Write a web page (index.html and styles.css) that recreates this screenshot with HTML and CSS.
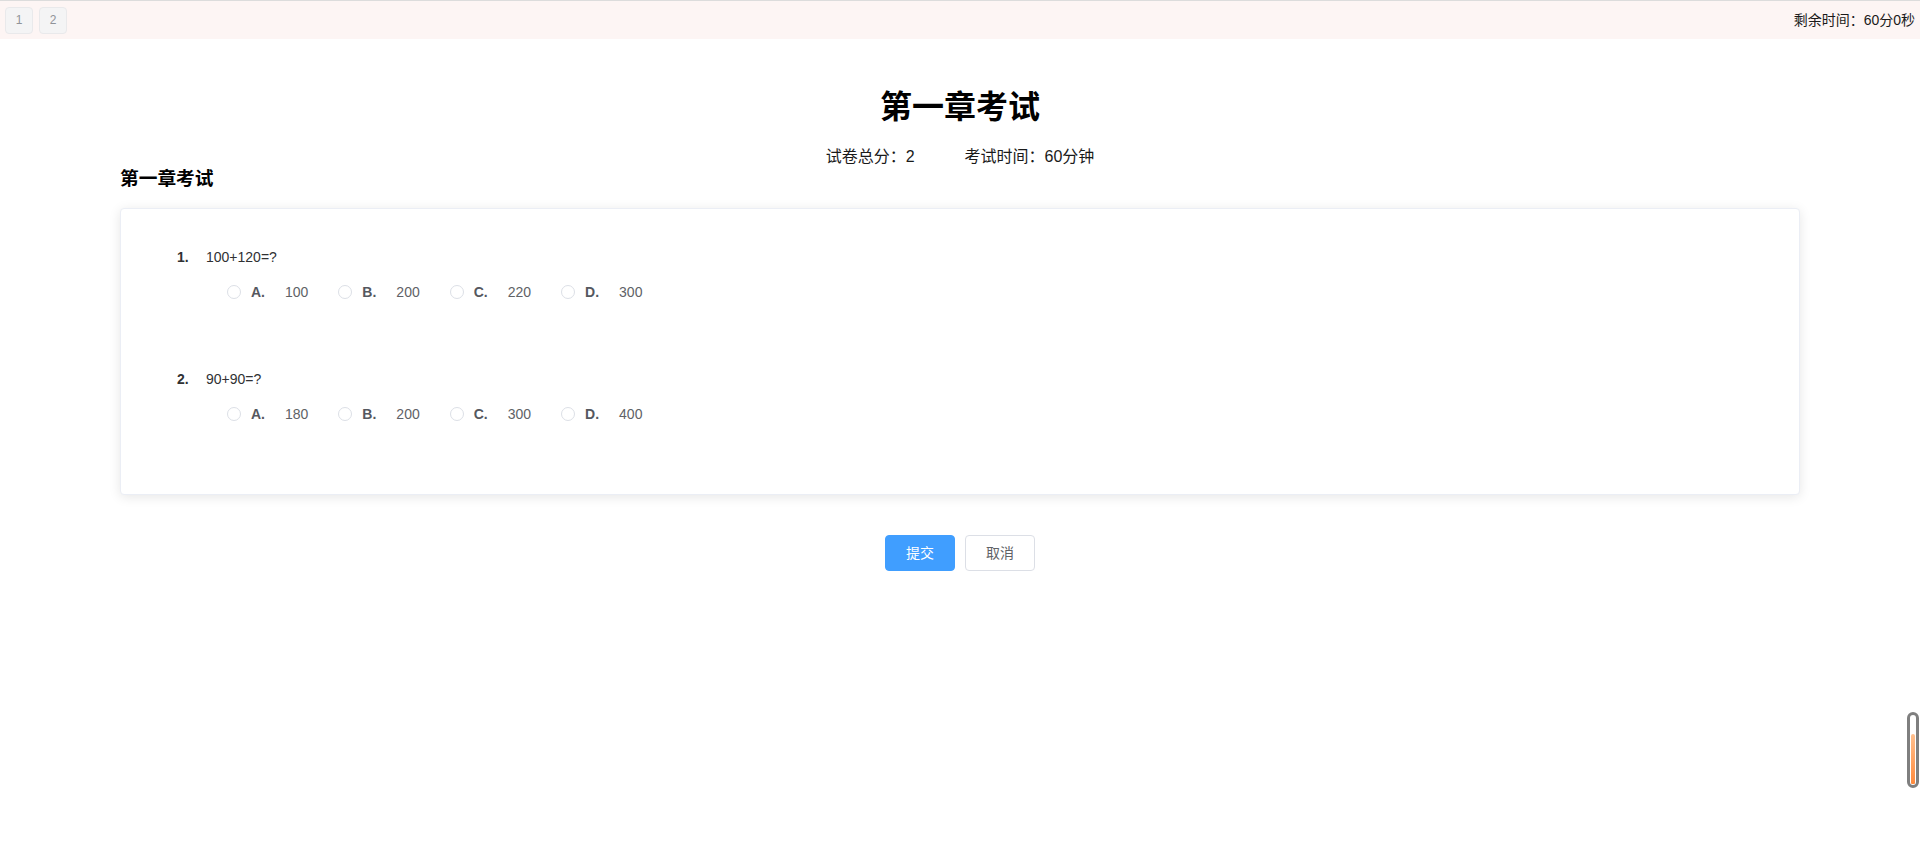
FILE: index.html
```html
<!DOCTYPE html>
<html lang="zh-CN">
<head>
<meta charset="utf-8">
<title>第一章考试</title>
<link rel="stylesheet" href="styles.css">
</head>
<body>
<header class="topbar">
  <nav class="nav">
    <button class="nav-btn">1</button>
    <button class="nav-btn">2</button>
  </nav>
  <div class="timer">剩余时间：60分0秒</div>
</header>
<main class="page">
  <h1 class="title">第一章考试</h1>
  <div class="meta"><span>试卷总分：2</span><span>考试时间：60分钟</span></div>
  <h3 class="section">第一章考试</h3>
  <div class="card">
    <div class="question">
      <div class="q-head"><span class="q-num">1.</span><span class="q-text">100+120=?</span></div>
      <div class="options">
        <label class="radio"><span class="radio-input"></span><span class="radio-label"><b class="opt-key">A.</b><span>100</span></span></label>
        <label class="radio"><span class="radio-input"></span><span class="radio-label"><b class="opt-key">B.</b><span>200</span></span></label>
        <label class="radio"><span class="radio-input"></span><span class="radio-label"><b class="opt-key">C.</b><span>220</span></span></label>
        <label class="radio"><span class="radio-input"></span><span class="radio-label"><b class="opt-key">D.</b><span>300</span></span></label>
      </div>
    </div>
    <div class="question">
      <div class="q-head"><span class="q-num">2.</span><span class="q-text">90+90=?</span></div>
      <div class="options">
        <label class="radio"><span class="radio-input"></span><span class="radio-label"><b class="opt-key">A.</b><span>180</span></span></label>
        <label class="radio"><span class="radio-input"></span><span class="radio-label"><b class="opt-key">B.</b><span>200</span></span></label>
        <label class="radio"><span class="radio-input"></span><span class="radio-label"><b class="opt-key">C.</b><span>300</span></span></label>
        <label class="radio"><span class="radio-input"></span><span class="radio-label"><b class="opt-key">D.</b><span>400</span></span></label>
      </div>
    </div>
  </div>
  <div class="actions">
    <button class="btn btn-primary">提交</button>
    <button class="btn">取消</button>
  </div>
</main>
<div class="thermo"><div class="thermo-fill"></div></div>
</body>
</html>
```
FILE: styles.css
```css
* { box-sizing: border-box; }
html, body { margin: 0; padding: 0; }
body {
  font-family: "Liberation Sans", "Noto Sans CJK SC", sans-serif;
  color: #222;
  background: #fff;
}
button { font-family: inherit; }

.topbar {
  display: flex;
  align-items: center;
  justify-content: space-between;
  height: 39px;
  padding: 0 5px;
  border-top: 1px solid #dcdcdc;
  background: #fdf5f4;
}
.nav { display: flex; gap: 6px; }
.nav-btn {
  width: 28px;
  height: 27px;
  padding: 0;
  font-size: 12px;
  line-height: 1;
  color: #909399;
  background: #f4f4f5;
  border: 1px solid #e9e9eb;
  border-radius: 4px;
}
.timer {
  font-size: 14px;
  line-height: 20px;
  color: #1a1a1a;
}

.page { padding: 0 120px; }
.title {
  margin: 48px 0 20px;
  font-size: 32px;
  line-height: 40px;
  font-weight: 700;
  text-align: center;
  color: #000;
}
.meta {
  display: flex;
  justify-content: center;
  gap: 50px;
  font-size: 16px;
  line-height: 20px;
  color: #1a1a1a;
}
.section {
  margin: 0 0 17px;
  font-size: 18.72px;
  line-height: 24px;
  font-weight: 700;
  color: #000;
}

.card {
  display: flex;
  flex-direction: column;
  gap: 67px;
  padding: 38px 56px 70px;
  background: #fff;
  border: 1px solid #ebeef5;
  border-radius: 4px;
  box-shadow: 0 2px 12px 0 rgba(0, 0, 0, 0.1);
}
.question { display: flex; flex-direction: column; gap: 15px; }
.q-head {
  display: flex;
  font-size: 14px;
  line-height: 20px;
  color: #303133;
}
.q-num { width: 29px; font-weight: 700; }
.options {
  display: flex;
  padding-left: 50px;
}
.radio {
  display: flex;
  align-items: center;
  margin-right: 30px;
  font-size: 14px;
  line-height: 20px;
  color: #606266;
}
.radio-input {
  width: 14px;
  height: 14px;
  border: 1px solid #dcdfe6;
  border-radius: 50%;
  background: #fff;
}
.radio-label { padding-left: 10px; }
.opt-key { margin-right: 20px; font-weight: 700; color: #55585f; }

.actions {
  display: flex;
  justify-content: center;
  gap: 10px;
  margin-top: 40px;
}
.btn {
  height: 36px;
  padding: 0 20px;
  font-size: 14px;
  line-height: 1;
  color: #606266;
  background: #fff;
  border: 1px solid #dcdfe6;
  border-radius: 4px;
}
.btn-primary {
  color: #fff;
  background: #409eff;
  border-color: #409eff;
}

.thermo {
  position: fixed;
  right: 1px;
  top: 712px;
  width: 12px;
  height: 76px;
  border: 3px solid #7f7f7f;
  border-radius: 7px;
  background: #fff;
}
.thermo-fill {
  position: absolute;
  left: 1px;
  bottom: 1px;
  width: 4px;
  height: 50px;
  border-radius: 2px 2px 1px 1px;
  background: linear-gradient(to bottom, #ffc08f, #ff8a3c);
}
```
